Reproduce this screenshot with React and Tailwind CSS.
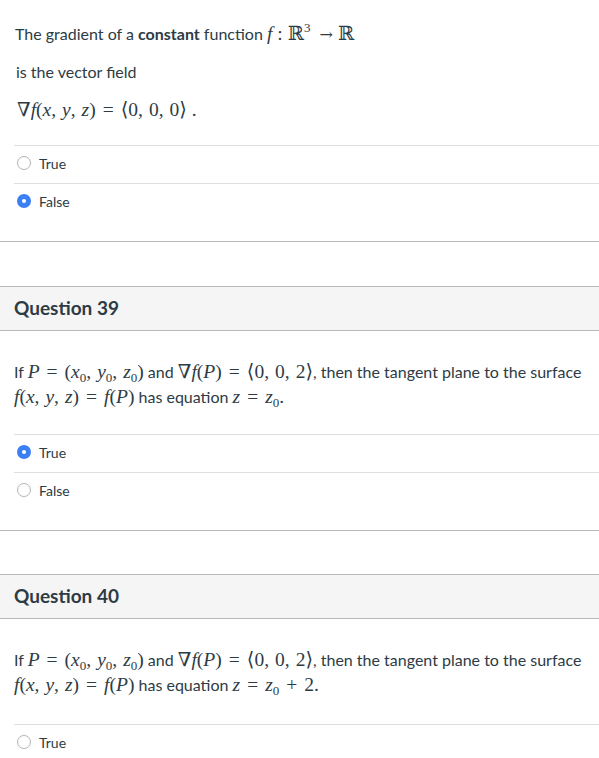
const serif = "font-['Liberation_Serif','DejaVu_Serif',serif] text-[19.5px] leading-none"

function M({ children }) {
  return <span className={serif}>{children}</span>
}

function I({ children }) {
  return <i className="italic">{children}</i>
}

function Sub({ children }) {
  return <span className="inline-block text-[13px] align-[-4px] leading-none">{children}</span>
}

function Op({ children }) {
  return <span className="mx-[7px]">{children}</span>
}

function Comma() {
  return <span className="mr-[6px]">,</span>
}

function Radio({ checked }) {
  if (checked) {
    return (
      <span className="flex h-[14px] w-[14px] shrink-0 items-center justify-center rounded-full bg-[#3b7ff5]">
        <span className="h-[4px] w-[4px] rounded-full bg-white" />
      </span>
    )
  }
  return <span className="h-[14px] w-[14px] shrink-0 rounded-full border border-[#b3b3b3] bg-white" />
}

function Answers({ selected, items = ['True', 'False'] }) {
  return (
    <div className="ml-[14px]">
      {items.map((label) => (
        <div
          key={label}
          className="flex h-[38px] items-center gap-[8px] border-t border-[#dedede] pb-[3px] pl-[3px]"
        >
          <Radio checked={selected === label} />
          <span className="text-[14px] text-[#2d3b45]">{label}</span>
        </div>
      ))}
    </div>
  )
}

function Header({ title }) {
  return (
    <div className="flex h-[45px] items-center border-t border-b border-[#b8b8b8] bg-[#f5f5f5] px-[14px]">
      <h2 className="text-[19px] font-bold text-[#2d3b45]">{title}</h2>
    </div>
  )
}

function PlaneText({ children, extra = '' }) {
  return (
    <div className={`px-[14px] pt-[28px] text-[16px] leading-[25px] text-[#2d3b45] ${extra}`}>
      <p className="whitespace-nowrap">
        If{' '}
        <M>
          <I>P</I>
          <Op>=</Op>(<I>x</I>
          <Sub>0</Sub>
          <Comma />
          <I>y</I>
          <Sub>0</Sub>
          <Comma />
          <I>z</I>
          <Sub>0</Sub>)
        </M>{' '}
        and{' '}
        <M>
          ∇<I>f</I>(<I>P</I>)<Op>=</Op>⟨0<Comma />0<Comma />2⟩
        </M>
        , then the tangent plane to the surface
      </p>
      <p className="whitespace-nowrap">
        <M>
          <I>f</I>(<I>x</I>
          <Comma />
          <I>y</I>
          <Comma />
          <I>z</I>)<Op>=</Op>
          <I>f</I>(<I>P</I>)
        </M>{' '}
        has equation{' '}
        <M>
          <I>z</I>
          <Op>=</Op>
          <I>z</I>
          <Sub>0</Sub>
          {children}
        </M>
      </p>
    </div>
  )
}

export default function App() {
  return (
    <div className="min-h-screen bg-white font-['Lato','Noto_Sans',sans-serif] text-[#2d3b45]">
      <div className="border-b border-[#b8b8b8]">
        <div className="px-[14px] pt-[21px] pb-[25px] text-[16px] leading-[20px]">
          <p className="pl-[1px]">
            The gradient of a <strong className="font-bold">constant</strong> function{' '}
            <M>
              <I>f</I>
              <span className="mx-[5px]">:</span>ℝ
              <span className="inline-block text-[13px] align-[8px]">3</span>
              <span className="ml-[9px] mr-[5px] font-['DejaVu_Serif',serif] text-[16px]">→</span>ℝ
            </M>
          </p>
          <p className="mt-[18px] pl-[2px]">is the vector field</p>
          <p className="mt-[18px] pl-[3px]">
            <M>
              ∇<I>f</I>(<I>x</I>
              <Comma />
              <I>y</I>
              <Comma />
              <I>z</I>)<Op>=</Op>⟨0<Comma />0<Comma />0⟩ .
            </M>
          </p>
        </div>
        <div className="pb-[20px]">
          <Answers selected="False" />
        </div>
      </div>

      <div className="mt-[44px] border-b border-[#b8b8b8]">
        <Header title="Question 39" />
        <PlaneText extra="pb-[25px]">.</PlaneText>
        <div className="pb-[20px]">
          <Answers selected="True" />
        </div>
      </div>

      <div className="mt-[43px]">
        <Header title="Question 40" />
        <PlaneText extra="pb-[27px]">
          <Op>+</Op>2.
        </PlaneText>
        <Answers selected="" items={['True']} />
      </div>
    </div>
  )
}
